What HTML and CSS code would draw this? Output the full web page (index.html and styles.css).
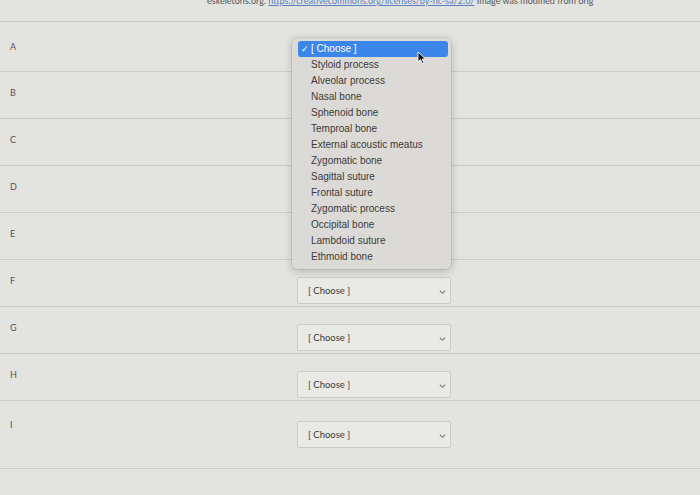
FILE: index.html
```html
<!DOCTYPE html>
<html lang="en">
<head>
  <meta charset="UTF-8">
  <meta name="viewport" content="width=device-width, initial-scale=1.0">
  <title>Skull features</title>
  <link rel="stylesheet" href="styles.css">
</head>
<body>
  <div class="credit">eskeletons.org. <a href="#">https://creativecommons.org/licenses/by-nc-sa/2.0/</a> Image was modified from orig</div>

  <div class="answers">
    <div class="row"><span class="label">A</span><div class="select">[ Choose ]<svg class="chev" viewBox="0 0 8 6"><path d="M1 1.5 L4 4.5 L7 1.5"/></svg></div></div>
    <div class="row"><span class="label">B</span><div class="select">[ Choose ]<svg class="chev" viewBox="0 0 8 6"><path d="M1 1.5 L4 4.5 L7 1.5"/></svg></div></div>
    <div class="row"><span class="label">C</span><div class="select">[ Choose ]<svg class="chev" viewBox="0 0 8 6"><path d="M1 1.5 L4 4.5 L7 1.5"/></svg></div></div>
    <div class="row"><span class="label">D</span><div class="select">[ Choose ]<svg class="chev" viewBox="0 0 8 6"><path d="M1 1.5 L4 4.5 L7 1.5"/></svg></div></div>
    <div class="row"><span class="label">E</span><div class="select">[ Choose ]<svg class="chev" viewBox="0 0 8 6"><path d="M1 1.5 L4 4.5 L7 1.5"/></svg></div></div>
    <div class="row"><span class="label">F</span><div class="select">[ Choose ]<svg class="chev" viewBox="0 0 8 6"><path d="M1 1.5 L4 4.5 L7 1.5"/></svg></div></div>
    <div class="row"><span class="label">G</span><div class="select">[ Choose ]<svg class="chev" viewBox="0 0 8 6"><path d="M1 1.5 L4 4.5 L7 1.5"/></svg></div></div>
    <div class="row"><span class="label">H</span><div class="select">[ Choose ]<svg class="chev" viewBox="0 0 8 6"><path d="M1 1.5 L4 4.5 L7 1.5"/></svg></div></div>
    <div class="row last"><span class="label">I</span><div class="select">[ Choose ]<svg class="chev" viewBox="0 0 8 6"><path d="M1 1.5 L4 4.5 L7 1.5"/></svg></div></div>
  </div>

  <!-- open menu of the first select -->
  <ul class="menu">
    <li class="picked"><span class="tick">✓</span>[ Choose ]</li>
    <li>Styloid process</li>
    <li>Alveolar process</li>
    <li>Nasal bone</li>
    <li>Sphenoid bone</li>
    <li>Temproal bone</li>
    <li>External acoustic meatus</li>
    <li>Zygomatic bone</li>
    <li>Sagittal suture</li>
    <li>Frontal suture</li>
    <li>Zygomatic process</li>
    <li>Occipital bone</li>
    <li>Lambdoid suture</li>
    <li>Ethmoid bone</li>
  </ul>

  <svg class="cursor" viewBox="0 0 10 14"><path d="M1 1 L1 11 L3.5 8.6 L5.4 12.8 L7 12 L5.2 8 L8.6 8 Z"/></svg>
</body>
</html>
```

FILE: styles.css
```css
body { margin: 0; background-color: #e3e3e0; font-family: Lato, "Liberation Sans", sans-serif; color: #3c3c3c; position: relative; height: 495px; overflow: hidden; }
.credit { margin-top: -5px; padding-left: 207px; font-size: 9px; line-height: 11px; color: #555; white-space: nowrap; }
.credit a { color: #5a7fc0; text-decoration: underline; }
.answers { margin-top: 15px; border-top: 1px solid #c9c9c6; }
.row { display: flex; align-items: flex-start; height: 47px; padding-top: 13px; border-bottom: 1px solid #cbcbc8; box-sizing: border-box; }
.row:first-child { height: 50px; padding-top: 17px; }
.row.last { height: 68px; padding-top: 16px; }
.label { flex: 0 0 297px; padding: 2px 0 0 10px; box-sizing: border-box; font-size: 9px; line-height: 12px; color: #555; }
.select { margin-top: 4px; width: 154px; height: 27px; box-sizing: border-box; border: 1px solid #cbcbc8; border-radius: 2px; background-color: #e9e9e6; display: flex; align-items: center; justify-content: space-between; padding: 0 4px 0 10px; font-size: 9.5px; color: #3a3a3a; }
.chev { width: 7px; height: 6px; fill: none; stroke: #777; stroke-width: 1.2; margin-top: 3px; }
.menu { position: absolute; left: 292px; top: 38px; width: 159px; margin: 0; padding: 3px 3px 4px 6px; box-sizing: border-box; list-style: none; background-color: #dcdad6; border-radius: 5px; box-shadow: 0 2px 8px rgba(0,0,0,0.22), 0 0 0 1px rgba(0,0,0,0.06); font-family: "Liberation Sans", Arial, sans-serif; font-size: 10px; color: #3a3a3a; }
.menu li { height: 16px; line-height: 16px; padding-left: 13px; white-space: nowrap; position: relative; }
.menu li.picked { background-color: #3d86e9; color: white; border-radius: 3px; }
.tick { position: absolute; left: 3px; top: 0; font-size: 9px; }
.cursor { position: absolute; left: 417px; top: 51px; width: 10px; height: 14px; fill: #111; stroke: white; stroke-width: 0.9; }
```
